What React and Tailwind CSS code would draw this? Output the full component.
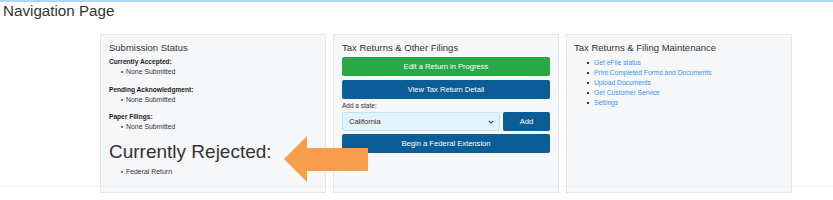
import React from 'react';

const font = { fontFamily: '"Liberation Sans", Arial, sans-serif' };

const Bullet = ({ children }) => (
    <div className="flex items-center ml-[12px] gap-[3px] text-[6.9px] leading-[10px] text-[#333]">
        <span className="w-[2px] h-[2px] rounded-full bg-[#444]" />
        <span>{children}</span>
    </div>
);

const StatusBlock = ({ label, value, className }) => (
    <div className={className}>
        <p className="text-[6.6px] leading-[10px] font-bold text-[#222]">{label}</p>
        <Bullet>{value}</Bullet>
    </div>
);

const Button = ({ children, green }) => (
    <button
        type="button"
        className={`w-full h-[19px] rounded-[2px] text-[7.6px] text-white flex items-center justify-center ${green ? 'bg-[#2ba846]' : 'bg-[#0b5d98]'}`}
    >
        {children}
    </button>
);

const links = [
    'Get eFile status',
    'Print Completed Forms and Documents',
    'Upload Documents',
    'Get Customer Service',
    'Settings',
];

export default function App() {
    return (
        <div className="relative w-[833px] h-[200px] overflow-hidden bg-white border-t-2 border-[#a9d9f7]" style={font}>
            <h1 className="pl-[3px] text-[15.2px] leading-[18px] text-[#333]">Navigation Page</h1>

            <div className="flex gap-[7px] pl-[100px] mt-[14px]">
                {/* Submission status */}
                <div className="w-[226px] h-[159px] bg-[#f6f7f9] border border-[#e4e7ea] px-[8px] pt-[7px]">
                    <h2 className="text-[9.5px] leading-[11px] text-[#333]">Submission Status</h2>
                    <StatusBlock className="mt-[4px]" label="Currently Accepted:" value="None Submitted" />
                    <StatusBlock className="mt-[8px]" label="Pending Acknowledgment:" value="None Submitted" />
                    <StatusBlock className="mt-[7px]" label="Paper Filings:" value="None Submitted" />
                    <p className="mt-[9px] text-[19px] leading-[22px] text-[#333]">Currently Rejected:</p>
                    <div className="mt-[4px]">
                        <Bullet>Federal Return</Bullet>
                    </div>
                </div>

                {/* Tax returns */}
                <div className="w-[226px] h-[159px] bg-[#f6f7f9] border border-[#e4e7ea] px-[8px] pt-[7px]">
                    <h2 className="text-[9.5px] leading-[11px] text-[#333]">Tax Returns &amp; Other Filings</h2>
                    <div className="mt-[4px] flex flex-col gap-[4px]">
                        <Button green>Edit a Return in Progress</Button>
                        <Button>View Tax Return Detail</Button>
                    </div>
                    <p className="mt-[2px] text-[6.5px] leading-[9px] text-[#333]">Add a state:</p>
                    <div className="mt-[2px] flex gap-[3px]">
                        <div className="w-[158px] h-[19px] rounded-[2px] bg-[#e1f3fd] border border-[#c3e2f6] flex items-center justify-between pl-[6px] pr-[5px]">
                            <span className="text-[7.5px] text-[#333]">California</span>
                            <svg width="6" height="4" viewBox="0 0 6 4">
                                <path d="M0.8 0.8 L3 3 L5.2 0.8" fill="none" stroke="#444" strokeWidth="1.1" />
                            </svg>
                        </div>
                        <div className="flex-1">
                            <Button>Add</Button>
                        </div>
                    </div>
                    <div className="mt-[3px]">
                        <Button>Begin a Federal Extension</Button>
                    </div>
                </div>

                {/* Maintenance */}
                <div className="w-[226px] h-[159px] bg-[#f6f7f9] border border-[#e4e7ea] px-[7px] pt-[7px]">
                    <h2 className="text-[9.5px] leading-[11px] text-[#333]">Tax Returns &amp; Filing Maintenance</h2>
                    <ul className="mt-[5px]">
                        {links.map((l) => (
                            <li key={l} className="flex items-center ml-[13px] gap-[5px] text-[6.7px] leading-[10px]">
                                <span className="w-[2px] h-[2px] bg-[#333]" />
                                <a href="#" className="text-[#3794f4]">{l}</a>
                            </li>
                        ))}
                    </ul>
                </div>
            </div>

            {/* faint rule crossing the page */}
            <div className="absolute left-0 right-0 top-[184px] h-px bg-[#e9ecef]/70 pointer-events-none" />

            {/* callout arrow */}
            <svg className="absolute left-[283px] top-[134px]" width="86" height="47" viewBox="0 0 86 47">
                <polygon points="1,23 24,0 24,12 85,12 85,35 24,35 24,46" fill="#f79d4c" />
            </svg>
        </div>
    );
}
